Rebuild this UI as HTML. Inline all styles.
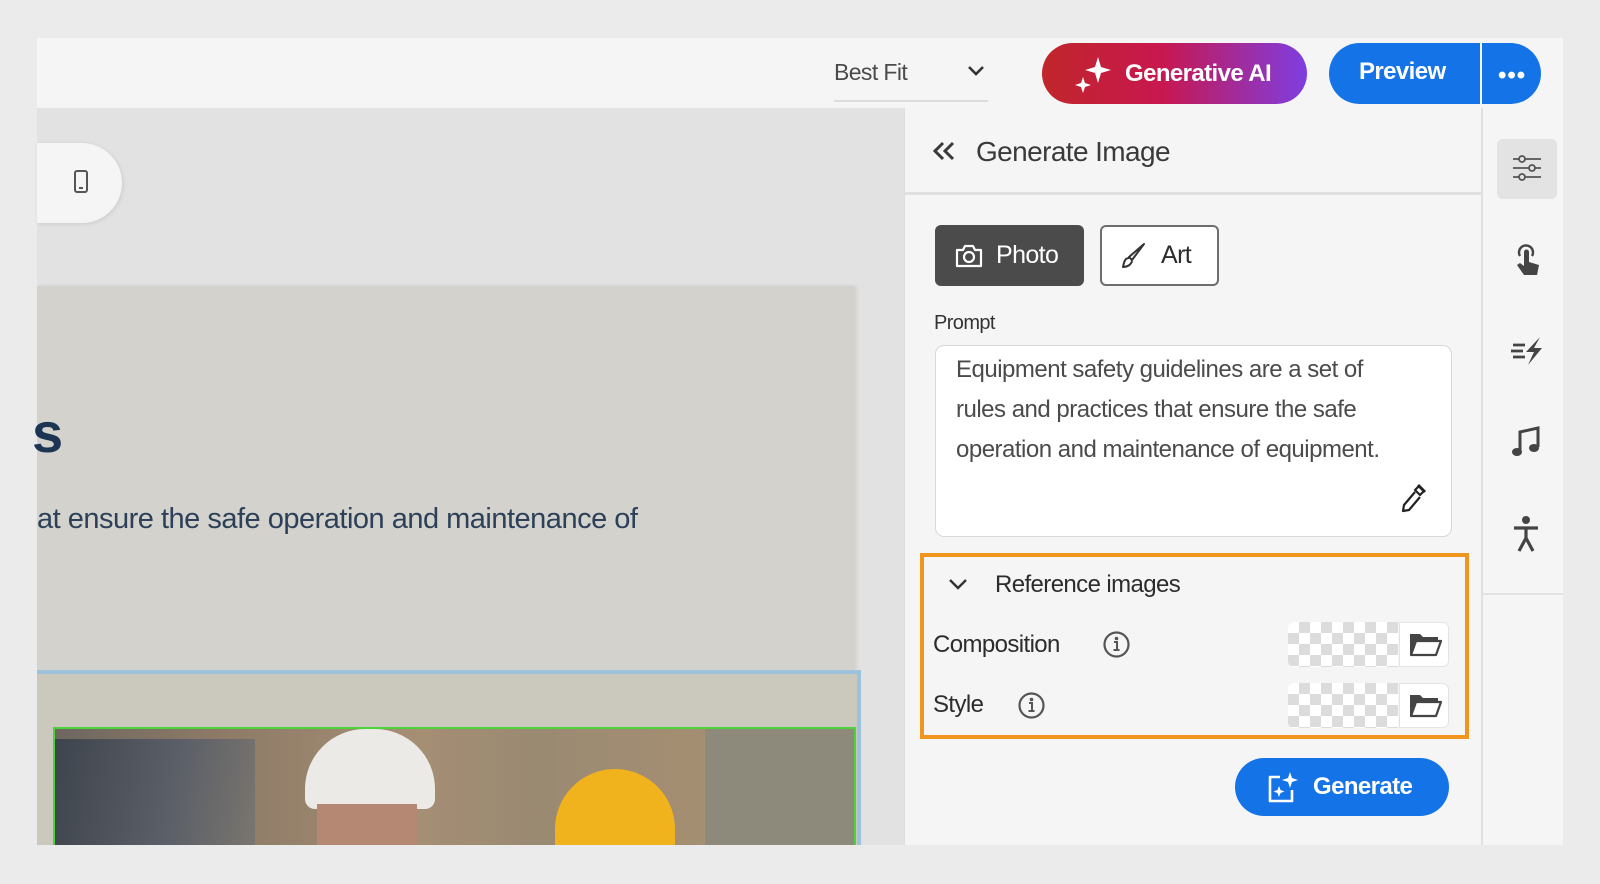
<!DOCTYPE html>
<html><head><meta charset="utf-8"><style>
*{margin:0;padding:0;box-sizing:border-box}
body{width:1600px;height:884px;background:#ebebeb;position:relative;overflow:hidden;font-family:"Liberation Sans",sans-serif;color:#2c2c2c}
.a{position:absolute}
.t{white-space:nowrap;letter-spacing:-0.6px}
</style></head><body>
<!-- top bar -->
<div class="a" style="left:37px;top:38px;width:1526px;height:70px;background:#f5f5f5"></div>
<div class="a t" style="left:834px;top:59px;font-size:23px;color:#4b4b4b">Best Fit</div>
<svg class="a" style="left:966px;top:64px" width="20" height="14" viewBox="0 0 20 14"><path d="M3 3l7 7 7-7" fill="none" stroke="#333" stroke-width="2.6"/></svg>
<div class="a" style="left:834px;top:100px;width:154px;height:2px;background:#dcdcdc"></div>
<div class="a" style="left:1042px;top:43px;width:265px;height:61px;border-radius:31px;background:linear-gradient(90deg,#c0262a 0%,#c8174f 45%,#7e3ee0 100%)"></div>
<svg class="a" style="left:1074px;top:55px" width="40" height="40" viewBox="0 0 40 40"><path d="M24 2l3 10 10 3-10 3-3 10-3-10-10-3 10-3z" fill="#fff"/><path d="M9 22l2 6 6 2-6 2-2 6-2-6-6-2 6-2z" fill="#fff"/></svg>
<div class="a t" style="left:1125px;top:60px;font-size:24px;font-weight:bold;color:#fff">Generative AI</div>
<div class="a" style="left:1329px;top:43px;width:212px;height:61px;border-radius:31px;background:#1473e6"></div>
<div class="a" style="left:1480px;top:43px;width:2px;height:61px;background:#f5f5f5"></div>
<div class="a t" style="left:1359px;top:58px;font-size:24px;font-weight:bold;color:#fff">Preview</div>
<div class="a" style="left:1498px;top:62px;font-size:24px;font-weight:bold;color:#fff;letter-spacing:1px">•••</div>

<!-- canvas -->
<div class="a" style="left:37px;top:108px;width:867px;height:737px;background:#e2e2e2"></div>
<div class="a" style="left:37px;top:143px;width:85px;height:80px;border-radius:0 40px 40px 0;background:#f5f5f5;box-shadow:1px 1px 4px rgba(0,0,0,.1)"></div>
<svg class="a" style="left:72px;top:170px" width="18" height="24" viewBox="0 0 18 24"><rect x="3" y="1" width="12" height="21" rx="2" fill="none" stroke="#555" stroke-width="2"/><line x1="7" y1="18" x2="11" y2="18" stroke="#555" stroke-width="2"/></svg>
<div class="a" style="left:37px;top:286px;width:818px;height:384px;background:#d4d2cc;box-shadow:2px 0 4px rgba(0,0,0,.08)"></div>
<div class="a" style="left:34px;top:400px;width:30px;height:70px;overflow:hidden"><div style="font-size:56px;color:#1c3553;font-weight:bold;margin-left:-2px">s</div></div>
<div class="a" style="left:37px;top:503px;font-size:29px;color:#2c4159;letter-spacing:-0.5px;white-space:nowrap">at ensure the safe operation and maintenance of</div>
<div class="a" style="left:37px;top:670px;width:824px;height:175px;background:#cbc8bd;border-top:4px solid #9dc2dc;border-right:4px solid #9dc2dc"></div>
<div class="a" style="left:53px;top:727px;width:803px;height:118px;border:2px solid #4cd33c;border-bottom:none;overflow:hidden;background:linear-gradient(90deg,#6d6760 0%,#8c7a66 20%,#a58e74 45%,#9a8a72 60%,#a48e72 80%,#b8a58a 100%)">
<div class="a" style="left:0;top:10px;width:200px;height:110px;background:linear-gradient(100deg,#3e444d,#5c6068 60%,#7a756e)"></div>
<div class="a" style="left:250px;top:0;width:130px;height:80px;border-radius:60px 60px 10px 10px;background:#eceae6"></div>
<div class="a" style="left:262px;top:75px;width:100px;height:50px;background:#b58873"></div>
<div class="a" style="left:500px;top:40px;width:120px;height:90px;border-radius:60px 60px 0 0;background:#f0b31e"></div>
<div class="a" style="left:650px;top:0;width:150px;height:118px;background:#8d8a7c"></div>
</div>

<!-- right panel -->
<div class="a" style="left:904px;top:108px;width:577px;height:737px;background:#f5f5f5;border-left:1px solid #dedede"></div>
<svg class="a" style="left:932px;top:140px" width="26" height="22" viewBox="0 0 26 22"><path d="M11 3l-8 8 8 8M21 3l-8 8 8 8" fill="none" stroke="#3a3a3a" stroke-width="3"/></svg>
<div class="a t" style="left:976px;top:136px;font-size:28px;color:#3a3a3a">Generate Image</div>
<div class="a" style="left:905px;top:192px;width:576px;height:3px;background:#e0e0e0"></div>
<div class="a" style="left:935px;top:225px;width:149px;height:61px;border-radius:6px;background:#4b4b4b"></div>
<svg class="a" style="left:954px;top:243px" width="30" height="26" viewBox="0 0 30 26"><path d="M3 7h6l2-4h8l2 4h6v16H3z" fill="none" stroke="#fff" stroke-width="2.2" stroke-linejoin="round"/><circle cx="15" cy="14" r="5" fill="none" stroke="#fff" stroke-width="2.2"/></svg>
<div class="a t" style="left:996px;top:241px;font-size:25px;color:#fff">Photo</div>
<div class="a" style="left:1100px;top:225px;width:119px;height:61px;border-radius:6px;background:#fff;border:2px solid #6e6e6e"></div>
<svg class="a" style="left:1120px;top:241px" width="28" height="30" viewBox="0 0 28 30"><path d="M24 3L12 19l-3-3zM9 17c-4 0-5 4-6 9 4 0 8-2 9-6" fill="none" stroke="#333" stroke-width="2" stroke-linejoin="round"/></svg>
<div class="a t" style="left:1161px;top:241px;font-size:25px;color:#2c2c2c">Art</div>
<div class="a t" style="left:934px;top:312px;font-size:20px;color:#333">Prompt</div>
<div class="a" style="left:935px;top:345px;width:517px;height:192px;background:#fff;border:1.5px solid #d8d8d8;border-radius:9px"></div>
<div class="a" style="left:956px;top:350px;font-size:24px;line-height:40px;color:#4b4b4b;letter-spacing:-0.5px;white-space:nowrap">Equipment safety guidelines are a set of<br>rules and practices that ensure the safe<br>operation and maintenance of equipment.</div>
<svg class="a" style="left:1399px;top:483px" width="28" height="32" viewBox="0 0 28 32"><path d="M20 3l5 5-4 4-5-5zM16 9l-11 13-1 6 6-1 11-13" fill="none" stroke="#222" stroke-width="2.2" stroke-linejoin="round"/><path d="M19 2l7 7" stroke="#222" stroke-width="3"/></svg>
<!-- orange box -->
<div class="a" style="left:920px;top:553px;width:549px;height:186px;border:4px solid #f0961e"></div>
<svg class="a" style="left:947px;top:576px" width="22" height="16" viewBox="0 0 22 16"><path d="M3 4l8 8 8-8" fill="none" stroke="#333" stroke-width="2.4"/></svg>
<div class="a t" style="left:995px;top:571px;font-size:24px;color:#2c2c2c">Reference images</div>
<div class="a t" style="left:933px;top:631px;font-size:24px;color:#2c2c2c">Composition</div>
<div class="a t" style="left:933px;top:691px;font-size:24px;color:#2c2c2c">Style</div>
<svg class="a" style="left:1102px;top:630px" width="29" height="29" viewBox="0 0 29 29"><circle cx="14.5" cy="14.5" r="12" fill="none" stroke="#555" stroke-width="2.2"/><circle cx="14.5" cy="8.5" r="1.8" fill="#555"/><path d="M12 12h3v8M11.5 20h6" fill="none" stroke="#555" stroke-width="2"/></svg>
<svg class="a" style="left:1017px;top:691px" width="29" height="29" viewBox="0 0 29 29"><circle cx="14.5" cy="14.5" r="12" fill="none" stroke="#555" stroke-width="2.2"/><circle cx="14.5" cy="8.5" r="1.8" fill="#555"/><path d="M12 12h3v8M11.5 20h6" fill="none" stroke="#555" stroke-width="2"/></svg>
<div class="a" style="left:1288px;top:622px;width:110px;height:45px;background-color:#fff;background-image:conic-gradient(#dcdcdc 25%,transparent 0 50%,#dcdcdc 0 75%,transparent 0);background-size:22px 22px;border-radius:6px 0 0 6px"></div>
<div class="a" style="left:1399px;top:622px;width:50px;height:45px;background:#fff;border-radius:0 6px 6px 0;border:1px solid #e4e4e4"></div>
<div class="a" style="left:1288px;top:683px;width:110px;height:45px;background-color:#fff;background-image:conic-gradient(#dcdcdc 25%,transparent 0 50%,#dcdcdc 0 75%,transparent 0);background-size:22px 22px;border-radius:6px 0 0 6px"></div>
<div class="a" style="left:1399px;top:683px;width:50px;height:45px;background:#fff;border-radius:0 6px 6px 0;border:1px solid #e4e4e4"></div>
<svg class="a" style="left:1408px;top:630px" width="34" height="28" viewBox="0 0 34 28"><path d="M2 4h10l3 3h15v4H8L3 25H2z" fill="#444"/><path d="M3 25L8 11h25l-5 14z" fill="none" stroke="#444" stroke-width="2.2" stroke-linejoin="round"/></svg>
<svg class="a" style="left:1408px;top:691px" width="34" height="28" viewBox="0 0 34 28"><path d="M2 4h10l3 3h15v4H8L3 25H2z" fill="#444"/><path d="M3 25L8 11h25l-5 14z" fill="none" stroke="#444" stroke-width="2.2" stroke-linejoin="round"/></svg>
<!-- generate -->
<div class="a" style="left:1235px;top:758px;width:214px;height:58px;border-radius:29px;background:#1473e6"></div>
<svg class="a" style="left:1266px;top:770px" width="34" height="34" viewBox="0 0 34 34"><path d="M14 7H4v24h22V20" fill="none" stroke="#fff" stroke-width="2.6" stroke-linejoin="round"/><path d="M24 2l2 6 6 2-6 2-2 6-2-6-6-2 6-2z" fill="#fff"/><path d="M13 16l1.5 4 4 1.5-4 1.5-1.5 4-1.5-4-4-1.5 4-1.5z" fill="#fff"/></svg>
<div class="a t" style="left:1313px;top:773px;font-size:24px;font-weight:bold;color:#fff">Generate</div>

<!-- rail -->
<div class="a" style="left:1481px;top:108px;width:82px;height:737px;background:#f5f5f5;border-left:2px solid #e0e0e0"></div>
<div class="a" style="left:1483px;top:593px;width:80px;height:2px;background:#e3e3e3"></div>
<div class="a" style="left:1497px;top:139px;width:60px;height:60px;border-radius:6px;background:#e3e3e3"></div>
<svg class="a" style="left:1511px;top:152px" width="32" height="32" viewBox="0 0 32 32" fill="none" stroke="#555" stroke-width="1.8"><path d="M2 7h6M14 7h16M2 16h16M24 16h6M2 25h6M14 25h16"/><circle cx="11" cy="7" r="3"/><circle cx="21" cy="16" r="3"/><circle cx="11" cy="25" r="3"/></svg>
<svg class="a" style="left:1511px;top:242px" width="32" height="36" viewBox="0 0 32 36"><path d="M9 14a7 7 0 1 1 12 0" fill="none" stroke="#444" stroke-width="2.4"/><path d="M13 10v14l-4-3-3 2 7 10h13l2-10-10-3V10a2.5 2.5 0 0 0-5 0z" fill="#444"/></svg>
<svg class="a" style="left:1510px;top:335px" width="34" height="32" viewBox="0 0 34 32"><path d="M3 10h12M1 16h12M3 22h12" stroke="#444" stroke-width="2.8"/><path d="M30 2L16 17h8l-6 13 14-17h-8z" fill="#444"/></svg>
<svg class="a" style="left:1511px;top:425px" width="30" height="34" viewBox="0 0 30 34"><path d="M9 26V7l18-4v19" fill="none" stroke="#444" stroke-width="3"/><ellipse cx="6" cy="27" rx="5" ry="4" fill="#444"/><ellipse cx="23" cy="23" rx="5" ry="4" fill="#444"/></svg>
<svg class="a" style="left:1512px;top:515px" width="28" height="38" viewBox="0 0 28 38"><circle cx="14" cy="5" r="4" fill="#444"/><path d="M2 13h24M14 13v10M14 23l-7 13M14 23l7 13" fill="none" stroke="#444" stroke-width="3.2"/></svg>
</body></html>
